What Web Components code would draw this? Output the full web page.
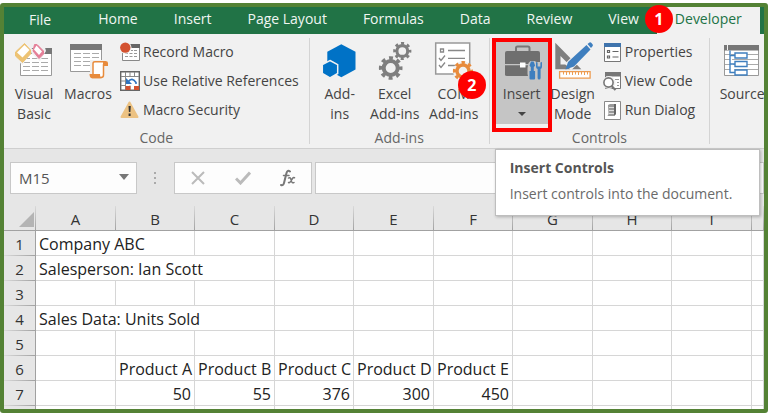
<!DOCTYPE html>
<html lang="en">
<head>
<meta charset="utf-8">
<title>Spreadsheet</title>
<style>
html, body {
  height: 100%;
  margin: 0;
}
body {
  box-sizing: border-box;
  padding-top: 3px;
  background: #fff;
  color: #444;
  font: 14px/20px "Open Sans", "Noto Sans", sans-serif;
}
</style>
</head>
<body>
<sheet-window>
  <ribbon-tabs slot="tabs">
    <ribbon-tab file>File</ribbon-tab>
    <ribbon-tab>Home</ribbon-tab>
    <ribbon-tab>Insert</ribbon-tab>
    <ribbon-tab>Page Layout</ribbon-tab>
    <ribbon-tab>Formulas</ribbon-tab>
    <ribbon-tab>Data</ribbon-tab>
    <ribbon-tab>Review</ribbon-tab>
    <ribbon-tab>View</ribbon-tab>
    <ribbon-tab active>Developer<step-badge slot="badge" style="--left: -12px; --top: -2px">1</step-badge></ribbon-tab>
  </ribbon-tabs>

  <ribbon-bar slot="ribbon">
    <ribbon-group label="Code" style="--pad: 0 10px 0 4px">
      <ribbon-button icon="visual-basic" style="--width: 52px">Visual<br>Basic</ribbon-button>
      <ribbon-button icon="macros" style="--width: 56px">Macros</ribbon-button>
      <ribbon-list>
        <ribbon-item icon="record">Record Macro</ribbon-item>
        <ribbon-item icon="relative">Use Relative References</ribbon-item>
        <ribbon-item icon="security">Macro Security</ribbon-item>
      </ribbon-list>
    </ribbon-group>
    <ribbon-group label="Add-ins" style="--pad: 0 4px 0 3px">
      <ribbon-button icon="add-ins" style="--width: 54px">Add-<br>ins</ribbon-button>
      <ribbon-button icon="excel-add-ins" style="--width: 56px">Excel<br>Add-ins</ribbon-button>
      <ribbon-button icon="com-add-ins" style="--width: 62px">COM<br>Add-ins<step-badge slot="over" style="--left: 35px; --top: 29px">2</step-badge></ribbon-button>
    </ribbon-group>
    <ribbon-group label="Controls" style="--pad: 0 14px 0 6px">
      <ribbon-button icon="insert" style="--width: 52px" pressed menu>Insert
        <tool-tip slot="over" heading="Insert Controls">Insert controls into the document.</tool-tip>
      </ribbon-button>
      <ribbon-button icon="design" style="--width: 50px">Design<br>Mode</ribbon-button>
      <ribbon-list>
        <ribbon-item icon="properties">Properties</ribbon-item>
        <ribbon-item icon="view-code">View Code</ribbon-item>
        <ribbon-item icon="run-dialog">Run Dialog</ribbon-item>
      </ribbon-list>
    </ribbon-group>
    <ribbon-group last style="--pad: 0 6px">
      <ribbon-button icon="source" style="--width: 52px">Source</ribbon-button>
    </ribbon-group>
  </ribbon-bar>

  <formula-bar slot="formula" cell="M15"></formula-bar>
  <sheet-grid></sheet-grid>
</sheet-window>

<script>
// ring plus a dashed circle for the eight teeth
const gear = (x, y, r, color) => {
  const tooth = (2 * Math.PI * r * 0.85) / 16;
  return `<g fill="none" stroke="${color}">
    <circle cx="${x}" cy="${y}" r="${r * 0.6}" stroke-width="${r * 0.34}"/>
    <circle cx="${x}" cy="${y}" r="${r * 0.85}" stroke-width="${r * 0.32}" stroke-dasharray="${tooth}" stroke-dashoffset="${tooth / 2}"/>
  </g>`;
};

// large icons are 40x38, small ones 20x20
const ICONS = {
  'visual-basic': `
    <path fill="#fff" stroke="#9a9a9a" d="M6.500 8.500h31v27h-31z"/>
    <path fill="#777" d="M6 8h32v6H6z"/>
    <path stroke="#aaa" d="M10 18.500h6m2 0h7m2 0h7M9 22.500h7m2 0h7m2 0h7M9 26.500h7m2 0h7m2 0h7M9 30.500h7m2 0h7m2 0h7"/>
    <path fill="#f1f1f1" d="M10 1l9 8.500L8.500 25 0 18V12zM22 2l8 2 2 7-6 10-9-8z"/>
    <path fill="#edc374" stroke="#edc374" stroke-linejoin="round" d="M10.500 3.500l6 6.500v4L8.500 22.500 1.500 16v-4z"/>
    <path fill="#fff" d="M10.500 5l5 5-7 7.500-5.500-5z"/>
    <path fill="#e57f98" stroke="#e57f98" stroke-linejoin="round" d="M20.500 4.500h2.500l6.500 6.500v3L25 18.500 19 11z"/>
    <path fill="#fff" d="M22.500 5.500l5.500 6-3 3.500-5-5.500z"/>`,
  'macros': `
    <path fill="#fff" stroke="#999" d="M2.500 4.500h31v27h-31z"/>
    <path fill="#777" d="M2 4h32v6H2z"/>
    <path stroke="#aaa" d="M6 13.500h7m2 0h7m2 0h7M6 17.500h7m2 0h7m2 0h7M6 21.500h7m2 0h7M6 25.500h7m2 0h7"/>
    <path fill="#f1f1f1" d="M22 20h19v20H19v-8h3z"/>
    <path fill="#fff" stroke="#e88b3c" stroke-width="1.500" d="M25 34V23.500q0-1.700 2-1.700h10.500q-2 .5-2 2.700V35q0 2.500-2.500 2.500H24"/>
    <path fill="#e88b3c" d="M35 26v-3q0-2 2.500-2t2.500 2v3zM21.500 34H32q0 4 2 4.300H24q-2.500-.3-2.500-4.300z"/>`,
  'add-ins': `
    <path fill="#0072c6" d="M21.300 4.300l14.200 7.400v17.800l-14.200 7.800-14-7.800V11.700z"/>
    <path fill="#0072c6" stroke="#f1f1f1" stroke-width="1.500" d="M10 20.500l7.700 4.200v8.800L10 38l-7.700-4.500v-8.800z"/>`,
  'excel-add-ins': gear(15.7, 28, 11.7, '#7f7f7f') + gear(27.3, 11, 9, '#7f7f7f'),
  'com-add-ins': `
    <path fill="#fff" stroke="#999" stroke-width="1.500" d="M1.700 3h34v31h-34z"/>
    <path fill="none" stroke="#888" stroke-width="1.300" d="M6.500 9h3v3h-3zM14 10.500h17M14 18.300h17M14 25.500h10M5 18l2 2.500 4-5M5 25l2 2.500 4-5"/>
    <circle cx="29" cy="31" r="10" fill="#f1f1f1"/>` + gear(29, 31, 10, '#e88b3c'),
  'insert': `
    <path fill="none" stroke="#777" stroke-width="2" d="M14 11V8q0-1.500 1.500-1.500h10.500q1.500 0 1.500 1.500v3"/>
    <path fill="#6f6f6f" d="M5 11h31q2 0 2 2v21.500q0 1.500-2 1.500H5q-2 0-2-1.500V13q0-2 2-2z"/>
    <path fill="#c5c5c5" d="M3 24h35v1.300H3z"/>
    <path fill="#c5c5c5" d="M25.500 28l1-5 2-2h4l2 1h6v18H27l-1.500-6z"/>
    <path fill="#fff" d="M18 22.500h5.500v5H18z"/>
    <path fill="#3f7fbf" d="M29 21.500h2.600l1.500 4-1.300 1.800V31h1.300v7.500q0 1-1 1h-3.600q-1 0-1-1V31h1.300v-3.700l-1.300-1.800zM34 22v4.500q0 2 1.600 2.600V38q0 1.500 1.500 1.500t1.500-1.500v-8.900q1.400-.6 1.400-2.600V22l-1.600.5v4h-2.800v-4z"/>`,
  'design': `
    <path fill="#7f7f7f" fill-rule="evenodd" d="M2.300 2.700l26 26.600h-26zM7.500 16v8.500H16z"/>
    <path stroke="#f1f1f1" stroke-width="9" d="M38.500 4L15 27"/>
    <path fill="#3f7fbf" d="M33.500 5l4 4.500L21 26.500l-8.500 3L15 22zM34.500 4l2-1.500q1-.6 2 .5l1 1.200q.8 1 0 2l-1.500 1.800z"/>
    <path fill="#fff" stroke="#ed9c51" stroke-width="1.300" d="M6.600 31.700h30.500v6.500H6.600z"/>
    <path stroke="#ed9c51" d="M10.500 32v2.500m3-2.500v3m3-3v2.500m3-2.500v3m3-3v2.500m3-2.500v3m3-3v2.500m3-2.500v3m3-3v2.500"/>`,
  'source': `
    <path fill="#fff" stroke="#999" d="M2.500 5.500h34v30h-34z"/>
    <path fill="#777" d="M2 5h35v5.500H2z"/>
    <path fill="#f1f1f1" d="M5 5h1v5H5z"/>
    <path stroke="#aaa" d="M3 14.500h33M3 19.500h33M3 24.500h33M3 29.500h33"/>
    <path fill="#fff" stroke="#3f7fbf" stroke-width="1.400" d="M8 10.500v22h5M8 15.500h5m-5 8.500h5M13 13h12v5H13zM13 21.500h12v5H13zM13 30h12v5H13z"/>`,
  'record': `
    <path fill="#fff" stroke="#888" d="M2.500 2.500h17v16h-17z"/>
    <path fill="#666" d="M10 2h10v4H10z"/>
    <path stroke="#999" d="M5 11.500h3m1.500 0h3m1.500 0h3M5 14.500h3m1.500 0h3m1.500 0h3M11 8.500h2m1 0h3"/>
    <circle cx="5.300" cy="5.600" r="6.200" fill="#f1f1f1"/>
    <circle cx="5.300" cy="5.600" r="5.200" fill="#d35230"/>`,
  'relative': `
    <path fill="#fff" stroke="#666" stroke-width="1.400" d="M.700.700h18.600v18.600H.700z"/>
    <path stroke="#888" d="M1 5.500h18M5.500 1v18M10 1v4.500M14.500 1v4.500M1 10h4.500M1 14.500h4.500M10 14.500V19"/>
    <path fill="#d35230" d="M5.500 15h5v4h-5zM14 15h5v4h-5z"/>
    <path fill="none" stroke="#2f74c0" stroke-width="1.600" d="M8 11q4-5.500 8 .5v1.500"/>
    <path fill="#2f74c0" d="M6 7v6h6z"/>`,
  'security': `
    <path fill="#ecc283" stroke="#ecc283" stroke-width="2" stroke-linejoin="round" d="M9.500 2.500l8 14.500h-16z"/>
    <path fill="#333" d="M8.500 6h2.300l-.4 6H8.900zM8.600 13.500h2V16h-2z"/>`,
  'properties': `
    <path fill="#fff" stroke="#777" d="M2.500 1.500h16v18h-16z"/>
    <path fill="#3f74ad" d="M2 1h17v4H2z"/>
    <path fill="none" stroke="#666" stroke-width="1.200" d="M5.500 8.500h2v2h-2zM5.500 14h2v2h-2zM10.500 9.500h6M10.500 15h6"/>`,
  'view-code': `
    <path fill="#fff" stroke="#777" d="M3.500 2.500h15v15h-15z"/>
    <path fill="#777" d="M3 1h16v4.500H3z"/>
    <path stroke="#999" d="M13 8.500h4M15 11.500h2M15 14.500h2"/>
    <circle cx="7" cy="11.500" r="6.500" fill="#f1f1f1"/>
    <circle cx="6.500" cy="11.500" r="4.600" fill="#fff" stroke="#777" stroke-width="1.600"/>
    <path stroke="#777" stroke-width="2.200" d="M9.500 15l4 4"/>`,
  'run-dialog': `
    <path fill="#fff" stroke="#888" d="M2.500 1.500h16v18h-16z"/>
    <path fill="#999" d="M6 5l2-1h6v10l-2 2H5.500l1-2z"/>
    <path fill="#666" d="M12 4h2v10l-2 2z"/>
    <path stroke="#ddd" d="M7 7.500h5M7 10.500h5M7 13.500h5"/>`
};

class BaseElement extends HTMLElement {
  constructor() {
    super();
    this.attachShadow({ mode: 'open' });
  }

  connectedCallback() {
    this.shadowRoot.innerHTML = this.render();
  }
}

class SheetWindow extends BaseElement {
  render() {
    return `
<style>
:host {
  display: flex;
  flex-direction: column;
  box-sizing: border-box;
  height: 100%;
  border: 4px solid #548235;
  border-radius: 3px;
  background: #fff;
}
</style>
<slot name="tabs"></slot>
<slot name="ribbon"></slot>
<slot name="formula"></slot>
<slot></slot>`;
  }
}

class RibbonTabs extends BaseElement {
  render() {
    return `
<style>
:host { display: block; }
nav {
  display: flex;
  height: 27px;
  background: #217346;
}
</style>
<nav><slot></slot></nav>`;
  }
}

class RibbonTab extends BaseElement {
  render() {
    return `
<style>
:host {
  display: block;
  position: relative;
}
a {
  display: block;
  height: 100%;
  box-sizing: border-box;
  padding: 0 18px;
  color: #f0f6f2;
  line-height: 24px;
  text-decoration: none;
  white-space: nowrap;
}
:host([file]) a {
  padding: 0 29px 0 25px;
  line-height: 26px;
}
:host([active]) a {
  background: #f1f1f1;
  color: #217346;
}
</style>
<a href="#"><slot></slot></a>
<slot name="badge"></slot>`;
  }
}

class StepBadge extends BaseElement {
  render() {
    return `
<style>
:host {
  position: absolute;
  z-index: 3;
  left: var(--left);
  top: var(--top);
  width: 28px;
  height: 28px;
  border-radius: 50%;
  background: #fe0000;
  color: #fff;
  font-size: 16px;
  font-weight: bold;
  line-height: 28px;
  text-align: center;
}
</style>
<slot></slot>`;
  }
}

class RibbonBar extends BaseElement {
  render() {
    return `
<style>
:host {
  display: flex;
  border-bottom: 1px solid #cfcfcf;
  background: #f1f1f1;
}
</style>
<slot></slot>`;
  }
}

class RibbonGroup extends BaseElement {
  render() {
    return `
<style>
:host {
  display: flex;
  flex: none;
  flex-direction: column;
  padding-top: 3px;
  border-right: 1px solid;
  border-image: linear-gradient(transparent 5px, #d4d4d4 5px, #d4d4d4 calc(100% - 5px), transparent 0) 1;
}
:host([last]) {
  flex: 1;
  min-width: 0;
  border: 0;
  overflow: hidden;
}
.items {
  display: flex;
  height: 87px;
  padding: var(--pad);
}
.label {
  height: 20px;
  margin-top: 4px;
  color: #666;
  text-align: center;
}
</style>
<div class="items"><slot></slot></div>
<div class="label">${this.getAttribute('label') || ''}</div>`;
  }
}

class RibbonButton extends BaseElement {
  render() {
    return `
<style>
:host {
  display: block;
  position: relative;
  flex: none;
  width: var(--width);
  margin-top: 5px;
}
button {
  display: flex;
  flex-direction: column;
  align-items: center;
  gap: 4px;
  width: 100%;
  height: 100%;
  padding: 0;
  border: 0;
  background: none;
  color: inherit;
  font: inherit;
  white-space: nowrap;
}
:host([pressed]) button {
  background: #c5c5c5;
}
svg { flex: none; }
.caret {
  display: none;
  margin-top: 4px;
  border: 4px solid transparent;
  border-top-color: #444;
  border-bottom: 0;
}
:host([menu]) .caret { display: block; }
.frame { display: none; }
:host([pressed]) .frame {
  display: block;
  position: absolute;
  z-index: 1;
  inset: -4px -4px -8px;
  border: 4px solid #fe0000;
  pointer-events: none;
}
</style>
<button type="button">
  <svg width="40" height="38" viewBox="0 2 40 38">${ICONS[this.getAttribute('icon')]}</svg>
  <span><slot></slot></span>
  <i class="caret"></i>
</button>
<div class="frame"></div>
<slot name="over"></slot>`;
  }
}

class RibbonList extends BaseElement {
  render() {
    return `
<style>
:host {
  display: flex;
  flex-direction: column;
  margin-left: 4px;
}
</style>
<slot></slot>`;
  }
}

class RibbonItem extends BaseElement {
  render() {
    return `
<style>
:host { display: block; }
button {
  display: flex;
  align-items: center;
  gap: 3px;
  height: 29px;
  padding: 0;
  border: 0;
  background: none;
  color: inherit;
  font: inherit;
  white-space: nowrap;
}
</style>
<button type="button">
  <svg width="20" height="20" viewBox="0 0 20 20">${ICONS[this.getAttribute('icon')]}</svg>
  <span><slot></slot></span>
</button>`;
  }
}

class ToolTip extends BaseElement {
  render() {
    return `
<style>
:host {
  position: absolute;
  z-index: 2;
  left: -1px;
  top: 107px;
  padding: 8px 27px 11px 14px;
  border: 1px solid #bebebe;
  background: #fff;
  box-shadow: 1px 1px 3px rgba(0, 0, 0, .25);
  color: #6a6a6a;
  white-space: nowrap;
}
b {
  display: block;
  margin-bottom: 6px;
  color: #555;
}
</style>
<b>${this.getAttribute('heading')}</b>
<slot></slot>`;
  }
}

class FormulaBar extends BaseElement {
  render() {
    return `
<style>
:host {
  display: flex;
  padding: 13px 0 12px 6px;
  background: #e6e6e6;
}
.box {
  display: flex;
  box-sizing: border-box;
  height: 32px;
  border: 1px solid #c8c8c8;
  background: #fdfdfd;
}
.name { width: 127px; }
input {
  flex: 1;
  min-width: 0;
  padding: 0 8px;
  border: 0;
  background: none;
  color: #555;
  font: inherit;
  font-size: 15px;
}
button {
  flex: 1;
  padding: 0;
  border: 0;
  background: none;
  line-height: 0;
}
.name button {
  flex: none;
  width: 24px;
}
.dots {
  flex: none;
  width: 37px;
}
.tools {
  width: 138px;
  margin-right: 3px;
}
.formula { flex: 1; }
</style>
<div class="box name">
  <input type="text" aria-label="Name box" value="${this.getAttribute('cell')}">
  <button type="button" aria-label="Name list"><svg width="10" height="8"><path fill="#777" d="M0 0h10L5 6z"/></svg></button>
</div>
<svg class="dots" width="37" height="32"><path fill="#aaa" d="M17 10h2v2h-2zM17 15h2v2h-2zM17 20h2v2h-2z"/></svg>
<div class="box tools">
  <button type="button" aria-label="Cancel"><svg width="14" height="14"><path stroke="#bbb" stroke-width="2" d="M1 1l12 12M13 1L1 13"/></svg></button>
  <button type="button" aria-label="Enter"><svg width="16" height="14"><path fill="none" stroke="#bbb" stroke-width="3" d="M1 7.500l4.500 4.500L15 1.500"/></svg></button>
  <button type="button" aria-label="Insert function"><svg width="16" height="18" fill="none" stroke="#777" stroke-linecap="round"><path stroke-width="2" d="M10 2.500Q7.500.500 6.500 4L4 14Q3.200 17 1 16"/><path stroke-width="1.500" d="M3.500 6.500h5.500M8.500 9q1.500-1 2.200.8l1 3q.8 1.700 2.300.7M14.500 8.700q-1.200-.4-2 .8l-2 3.200q-.8 1.300-2 .8"/></svg></button>
</div>
<div class="box formula"><input type="text" aria-label="Formula"></div>`;
  }
}

const COLUMNS = ['A', 'B', 'C', 'D', 'E', 'F', 'G', 'H', 'I', ''];

// long labels take the columns that their text runs over
const ROWS = [
  [{ text: 'Company ABC', span: 2 }],
  [{ text: 'Salesperson: Ian Scott', span: 3 }],
  [],
  [{ text: 'Sales Data: Units Sold', span: 3 }],
  [],
  ['', 'Product A', 'Product B', 'Product C', 'Product D', 'Product E'],
  ['', 50, 55, 376, 300, 450]
];

class SheetGrid extends BaseElement {
  row(cells, number) {
    let used = 0;
    let html = '';
    for (const cell of cells) {
      const { text = cell, span = 1 } = cell;
      html += `<td colspan="${span}"${typeof text === 'number' ? ' class="num"' : ''}>${text}</td>`;
      used += span;
    }
    html += '<td></td>'.repeat(COLUMNS.length - used);
    return `<tr><th scope="row">${number}</th>${html}</tr>`;
  }

  render() {
    return `
<style>
:host {
  display: block;
  flex: 1;
  min-height: 0;
  overflow: hidden;
}
table {
  width: 100%;
  table-layout: fixed;
  border-spacing: 0;
  color: #222;
  font-size: 16px;
}
th, td {
  box-sizing: border-box;
  height: 25px;
  padding: 2px 0 0 3px;
  line-height: 22px;
  white-space: nowrap;
  border: solid #d6d6d6;
  border-width: 0 1px 1px 0;
}
th {
  padding: 2px 0 0;
  background: #e6e6e6;
  color: #333;
  font-size: 15px;
  font-weight: normal;
}
thead th, thead td {
  background: #e6e6e6;
  border-bottom-color: #a0a0a0;
  border-image: linear-gradient(#dcdcdc, #a0a0a0) 1;
}
tbody th {
  border-right-color: #a0a0a0;
  border-image: linear-gradient(90deg, #dcdcdc, #a0a0a0) 1;
}
.num {
  padding-right: 3px;
  text-align: right;
}
.head { width: 32px; }
.odd { width: 80px; }
.even { width: 79px; }
svg {
  display: block;
  margin-left: 12px;
}
tbody tr:last-child > * { border-bottom: 0; }
</style>
<table>
  <colgroup>
    <col class="head">
    ${COLUMNS.map((name, i) => name ? `<col class="${i % 2 ? 'even' : 'odd'}">` : '<col>').join('')}
  </colgroup>
  <thead>
    <tr>
      <td><svg width="15" height="15"><path fill="#b4b4b4" d="M15 0v15H0z"/></svg></td>
      ${COLUMNS.map(name => name ? `<th scope="col">${name}</th>` : '<td></td>').join('')}
    </tr>
  </thead>
  <tbody>
    ${ROWS.map((cells, i) => this.row(cells, i + 1)).join('')}
    ${this.row([], '')}
  </tbody>
</table>`;
  }
}

customElements.define('sheet-window', SheetWindow);
customElements.define('ribbon-tabs', RibbonTabs);
customElements.define('ribbon-tab', RibbonTab);
customElements.define('step-badge', StepBadge);
customElements.define('ribbon-bar', RibbonBar);
customElements.define('ribbon-group', RibbonGroup);
customElements.define('ribbon-button', RibbonButton);
customElements.define('ribbon-list', RibbonList);
customElements.define('ribbon-item', RibbonItem);
customElements.define('tool-tip', ToolTip);
customElements.define('formula-bar', FormulaBar);
customElements.define('sheet-grid', SheetGrid);
</script>
</body>
</html>
